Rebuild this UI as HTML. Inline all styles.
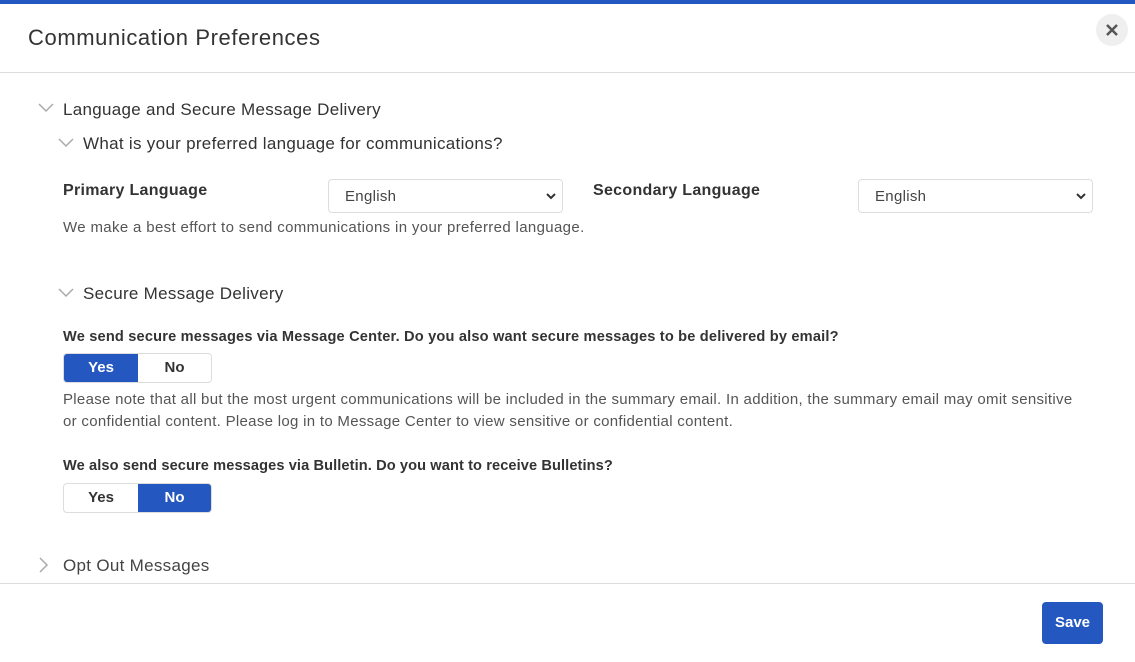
<!DOCTYPE html>
<html><head><style>
body{margin:0;width:1135px;height:662px;position:relative;background:#fff;font-family:"Liberation Sans",sans-serif;color:#333;overflow:hidden}
.a{position:absolute;white-space:nowrap}
.sel{position:absolute;height:34px;border:1px solid #ddd;border-radius:4px;box-sizing:border-box;font-size:15px;color:#444;padding-left:16px;line-height:34px;letter-spacing:0.3px}
.sel svg{position:absolute;right:6px;top:13px}
.tog{position:absolute;width:149px;height:30px;border:1px solid #ddd;border-radius:4px;box-sizing:border-box;display:flex;overflow:hidden;font-weight:bold;font-size:15px}
.tog div{flex:0 0 74px;text-align:center;line-height:28px;color:#333}
.tog div+div{flex:1}
.tog .on{background:#2457c0;color:#fff}
</style></head><body>
<div class="a" style="left:0;top:0;width:1135px;height:4px;background:#2457c0"></div>
<div class="a" style="left:28px;top:25px;font-size:22px;color:#333;letter-spacing:0.6px">Communication Preferences</div>
<div class="a" style="left:1096px;top:14px;width:32px;height:32px;border-radius:50%;background:#efefef"></div>
<svg class="a" style="left:1104px;top:22px" width="16" height="16"><path d="M3 3L13 13M13 3L3 13" stroke="#555" stroke-width="2.5"/></svg>
<div class="a" style="left:0;top:72px;width:1135px;height:1px;background:#ddd"></div>

<svg class="a" style="left:38px;top:103px" width="16" height="10"><path d="M1 1L8 8L15 1" stroke="#aaa" stroke-width="1.5" fill="none"/></svg>
<div class="a" style="left:63px;top:100px;font-size:17px;letter-spacing:0.3px">Language and Secure Message Delivery</div>
<svg class="a" style="left:58px;top:138px" width="16" height="10"><path d="M1 1L8 8L15 1" stroke="#aaa" stroke-width="1.5" fill="none"/></svg>
<div class="a" style="left:83px;top:134px;font-size:17px;letter-spacing:0.3px">What is your preferred language for communications?</div>

<div class="a" style="left:63px;top:182px;font-size:16px;font-weight:bold;letter-spacing:0.3px">Primary Language</div>
<div class="sel" style="left:328px;top:179px;width:235px">English<svg width="10" height="7"><path d="M1 1L5 5L9 1" stroke="#333" stroke-width="2" fill="none"/></svg></div>
<div class="a" style="left:593px;top:182px;font-size:16px;font-weight:bold;letter-spacing:0.3px">Secondary Language</div>
<div class="sel" style="left:858px;top:179px;width:235px">English<svg width="10" height="7"><path d="M1 1L5 5L9 1" stroke="#333" stroke-width="2" fill="none"/></svg></div>
<div class="a" style="left:63px;top:219px;font-size:15px;color:#555;letter-spacing:0.35px">We make a best effort to send communications in your preferred language.</div>

<svg class="a" style="left:58px;top:288px" width="16" height="10"><path d="M1 1L8 8L15 1" stroke="#aaa" stroke-width="1.5" fill="none"/></svg>
<div class="a" style="left:83px;top:284px;font-size:17px;letter-spacing:0.3px">Secure Message Delivery</div>

<div class="a" style="left:63px;top:329px;font-size:14.6px;font-weight:bold;letter-spacing:0.18px">We send secure messages via Message Center. Do you also want secure messages to be delivered by email?</div>
<div class="tog" style="left:63px;top:353px"><div class="on">Yes</div><div>No</div></div>
<div class="a" style="left:63px;top:389px;font-size:15px;color:#555;line-height:22px;white-space:normal;width:1020px;letter-spacing:0.3px">Please note that all but the most urgent communications will be included in the summary email. In addition, the summary email may omit sensitive or confidential content. Please log in to Message Center to view sensitive or confidential content.</div>

<div class="a" style="left:63px;top:458px;font-size:14.6px;font-weight:bold;letter-spacing:0.1px">We also send secure messages via Bulletin. Do you want to receive Bulletins?</div>
<div class="tog" style="left:63px;top:483px"><div>Yes</div><div class="on">No</div></div>

<svg class="a" style="left:39px;top:557px" width="10" height="16"><path d="M1 1L8 8L1 15" stroke="#aaa" stroke-width="1.5" fill="none"/></svg>
<div class="a" style="left:63px;top:556px;font-size:17px;color:#444;letter-spacing:0.3px">Opt Out Messages</div>
<div class="a" style="left:0;top:583px;width:1135px;height:1px;background:#ddd"></div>
<div class="a" style="left:1042px;top:602px;width:61px;height:42px;background:#2457c0;border-radius:4px;color:#fff;font-weight:bold;font-size:15px;text-align:center;line-height:42px">Save</div>
</body></html>
